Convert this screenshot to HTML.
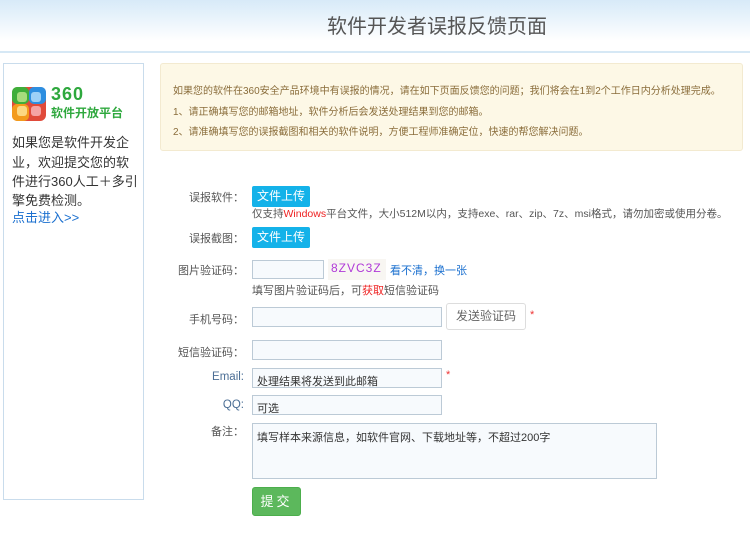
<!DOCTYPE html>
<html><head><meta charset="utf-8"><style>
*{margin:0;padding:0;box-sizing:border-box}
body{width:750px;height:533px;background:#fff;font-family:"Liberation Sans","Noto Sans CJK SC",sans-serif;position:relative;overflow:hidden;color:#333}
.a{position:absolute;white-space:nowrap}
#hd{position:absolute;left:0;top:0;width:750px;height:53px;background:linear-gradient(#d7eaf8,#fff 80%);border-bottom:2px solid #d6e8f5}
#hd span{position:absolute;left:327px;top:10px;font-size:20px;color:#555}
#side{position:absolute;left:3px;top:63px;width:141px;height:437px;border:1px solid #c9dcec}
#note{position:absolute;left:160px;top:63px;width:583px;height:88px;background:#fdf8e6;border:1px solid #f3ead0;border-radius:3px;font-size:10px;color:#8a6d3b}
#note div{position:absolute;left:12px;white-space:nowrap}
.lb{position:absolute;right:506px;font-size:11px;color:#555;text-align:right;white-space:nowrap}
.btn{position:absolute;left:252px;width:58px;height:21px;background:#14b2e9;color:#fff;font-size:12px;text-align:center;line-height:21px;border-radius:2px}
.in{position:absolute;left:252px;width:190px;height:20px;background:#f7fafd;border:1px solid #bccad6;font-size:11px;color:#333;padding:4px 0 0 4px}
.hint{font-size:11px;color:#555}
.star{color:#e33;font-size:11px}
.sl{position:absolute;left:8px;font-size:13px;color:#333;white-space:nowrap}
</style></head><body>
<div id="hd"><span>软件开发者误报反馈页面</span></div>
<div id="side">
<svg class="a" style="left:8px;top:23px" width="34" height="34" viewBox="0 0 34 34">
<rect x="0" y="0" width="34" height="34" rx="6" fill="#e04a3a"/>
<rect x="0" y="0" width="17" height="17" rx="5" fill="#3fae3a"/>
<rect x="17" y="0" width="17" height="17" rx="5" fill="#2d8ee0"/>
<rect x="0" y="17" width="17" height="17" rx="5" fill="#f39b1c"/>
<rect x="5" y="5" width="10" height="10" rx="3" fill="#a7dc7d"/>
<rect x="19" y="5" width="10" height="10" rx="3" fill="#9cd0f7"/>
<rect x="5" y="19" width="10" height="10" rx="3" fill="#fcd882"/>
<rect x="19" y="19" width="10" height="10" rx="3" fill="#f5a3a3"/>
</svg>
<div class="a" style="left:47px;top:20px;font-size:18px;font-weight:bold;color:#2ea83d;letter-spacing:1px">360</div>
<div class="a" style="left:47px;top:40px;font-size:12px;font-weight:bold;color:#2ea83d">软件开放平台</div>
<div class="sl" style="top:68px">如果您是软件开发企</div>
<div class="sl" style="top:88px">业，欢迎提交您的软</div>
<div class="sl" style="top:107px">件进行360人工＋多引</div>
<div class="sl" style="top:126px">擎免费检测。</div>
<div class="sl" style="top:143px;color:#1a6fcf">点击进入&gt;&gt;</div>
</div>
<div id="note">
<div style="top:18px">如果您的软件在360安全产品环境中有误报的情况，请在如下页面反馈您的问题；我们将会在1到2个工作日内分析处理完成。</div>
<div style="top:39px">1、请正确填写您的邮箱地址，软件分析后会发送处理结果到您的邮箱。</div>
<div style="top:59px">2、请准确填写您的误报截图和相关的软件说明，方便工程师准确定位，快速的帮您解决问题。</div>
</div>

<div class="lb" style="top:189px">误报软件：</div>
<div class="btn" style="top:186px">文件上传</div>
<div class="a hint" style="left:252px;top:206px;font-size:10.5px">仅支持<span style="color:#e22">Windows</span>平台文件，大小512M以内，支持exe、rar、zip、7z、msi格式，请勿加密或使用分卷。</div>

<div class="lb" style="top:230px">误报截图：</div>
<div class="btn" style="top:227px">文件上传</div>

<div class="lb" style="top:262px">图片验证码：</div>
<div class="in" style="top:260px;width:72px;height:19px"></div>
<div class="a" style="left:328px;top:259px;width:58px;height:21px;background:#f8f6f2"></div>
<div class="a" style="left:331px;top:261px;font-size:12px;color:#b03ad8;letter-spacing:1px">8ZVC3Z</div>
<div class="a" style="left:390px;top:262px;font-size:11px;color:#1a6fcf">看不清，换一张</div>
<div class="a hint" style="left:252px;top:282px">填写图片验证码后，可<span style="color:#e22">获取</span>短信验证码</div>

<div class="lb" style="top:311px">手机号码：</div>
<div class="in" style="top:307px;height:20px"></div>
<div class="a" style="left:446px;top:303px;width:80px;height:27px;border:1px solid #ddd;border-radius:3px;font-size:12px;color:#666;text-align:center;line-height:25px">发送验证码</div>
<div class="a star" style="left:530px;top:309px">*</div>

<div class="lb" style="top:344px">短信验证码：</div>
<div class="in" style="top:340px"></div>

<div class="lb" style="top:371px;color:#4b6e95;font-size:11.5px">Email:</div>
<div class="in" style="top:368px">处理结果将发送到此邮箱</div>
<div class="a star" style="left:446px;top:369px">*</div>

<div class="lb" style="top:399px;color:#4b6e95;font-size:11.5px">QQ:</div>
<div class="in" style="top:395px">可选</div>

<div class="lb" style="top:423px">备注：</div>
<div class="in" style="top:423px;width:405px;height:56px;padding-top:5px">填写样本来源信息，如软件官网、下载地址等，不超过200字</div>

<div class="a" style="left:252px;top:487px;width:49px;height:29px;background:#5cb85c;border:1px solid #4cae4c;border-radius:3px;color:#fff;font-size:13px;text-align:center;line-height:27px;letter-spacing:3px">提交</div>
</body></html>
